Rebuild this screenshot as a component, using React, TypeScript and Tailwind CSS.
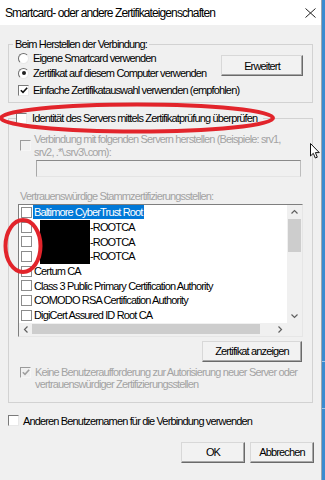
const FONT = "[font-family:'Liberation_Sans',Arial,sans-serif]";

function Check3D({ checked = false, disabled = false }: { checked?: boolean; disabled?: boolean }) {
  return (
    <span
      className={
        disabled
          ? "relative flex h-[11px] w-[11px] shrink-0 items-center justify-center border border-t-[#9a9a9a] border-l-[#9a9a9a] border-b-[#f6f6f6] border-r-[#f6f6f6] bg-[#f0f0f0]"
          : "relative flex h-[11px] w-[11px] shrink-0 items-center justify-center border border-t-[#7a7a7a] border-l-[#7a7a7a] border-b-[#e8e8e8] border-r-[#e8e8e8] bg-white"
      }
    >
      {checked && (
        <svg width="8" height="7" viewBox="0 0 8 7">
          <path d="M0.8 3.2 L3 5.4 L7.2 0.8" fill="none" stroke={disabled ? "#a0a0a0" : "#111"} strokeWidth="1.6" />
        </svg>
      )}
    </span>
  );
}

function Radio({ checked = false }: { checked?: boolean }) {
  return (
    <span className="flex h-[11px] w-[11px] shrink-0 items-center justify-center rounded-full border border-t-[#6e6e6e] border-l-[#6e6e6e] border-b-[#e8e8e8] border-r-[#e8e8e8] bg-white">
      {checked && <span className="h-[4px] w-[4px] rounded-full bg-[#222]" />}
    </span>
  );
}

function Btn({ children, className }: { children: React.ReactNode; className: string }) {
  return (
    <div
      className={
        "flex items-center justify-center border border-t-[#d8d8d8] border-l-[#d8d8d8] border-b-[#6a6a6a] border-r-[#6a6a6a] bg-[#f2f2f2] shadow-[inset_-1px_-1px_0_#a8a8a8] " +
        className
      }
    >
      {children}
    </div>
  );
}

function Chevron({ dir }: { dir: "up" | "down" | "left" | "right" }) {
  const d = {
    up: "M0.5 4.5 L3.5 1.5 L6.5 4.5",
    down: "M0.5 1.5 L3.5 4.5 L6.5 1.5",
    left: "M4.5 0.5 L1.5 3.5 L4.5 6.5",
    right: "M1.5 0.5 L4.5 3.5 L1.5 6.5",
  }[dir];
  const vertical = dir === "up" || dir === "down";
  return (
    <svg width={vertical ? 7 : 6} height={vertical ? 6 : 7} viewBox={vertical ? "0 0 7 6" : "0 0 6 7"}>
      <path d={d} fill="none" stroke="#606060" strokeWidth="1.2" />
    </svg>
  );
}

const certs = [
  { name: "Baltimore CyberTrust Root", selected: true },
  { name: "-ROOTCA", redacted: true },
  { name: "-ROOTCA", redacted: true },
  { name: "-ROOTCA", redacted: true },
  { name: "Certum CA" },
  { name: "Class 3 Public Primary Certification Authority" },
  { name: "COMODO RSA Certification Authority" },
  { name: "DigiCert Assured ID Root CA" },
];

function CertList() {
  return (
    <div className="flex flex-col border border-t-[#7f7f7f] border-l-[#7f7f7f] border-b-[#e6e6e6] border-r-[#e6e6e6] bg-white">
      <div className="flex">
        <div className="flex flex-1 flex-col overflow-hidden">
          {certs.map((c, i) => (
            <div key={i} className="flex h-[14.7px] items-center whitespace-nowrap pl-[2px]">
              <span className="h-[11px] w-[11px] shrink-0 border border-[#8c8c8c] bg-white" />
              {c.selected ? (
                <span className="ml-[1px] bg-[#0078d7] px-[1px] text-white">{c.name}</span>
              ) : c.redacted ? (
                <span className="flex h-full items-center">
                  <span className="ml-[8px] h-full w-[50px] bg-black" />
                  <span>{c.name}</span>
                </span>
              ) : (
                <span className="ml-[2px]">{c.name}</span>
              )}
            </div>
          ))}
        </div>
        <div className="flex w-[15px] flex-col items-center bg-[#f0f0f0]">
          <div className="flex h-[14px] items-center">
            <Chevron dir="up" />
          </div>
          <div className="h-[33px] w-[13px] bg-[#cdcdcd]" />
          <div className="flex-1" />
          <div className="flex h-[14px] items-center">
            <Chevron dir="down" />
          </div>
        </div>
      </div>
      <div className="flex h-[13px]">
        <div className="flex flex-1 items-center bg-[#f0f0f0]">
          <div className="flex w-[13px] justify-center">
            <Chevron dir="left" />
          </div>
          <div className="h-[10px] w-[228px] bg-[#cdcdcd]" />
          <div className="flex-1" />
          <div className="flex w-[15px] justify-center">
            <Chevron dir="right" />
          </div>
        </div>
        <div className="w-[15px] bg-[#f0f0f0]" />
      </div>
    </div>
  );
}

export default function App() {
  return (
    <div className={"relative flex h-[480px] w-[325px] overflow-hidden bg-white text-[11px] leading-[14px] tracking-[-0.85px] text-black " + FONT}>
      <div className="flex w-[321px] flex-col">
        {/* title bar */}
        <div className="flex h-[25px] shrink-0 items-center justify-between bg-white pl-[5px] pr-[5px]">
          <span className="text-[12px] tracking-[-0.9px]">Smartcard- oder andere Zertifikateigenschaften</span>
          <svg width="11" height="10" viewBox="0 0 11 10">
            <path d="M0.5 0.5 L10.5 9.5 M10.5 0.5 L0.5 9.5" stroke="#222" strokeWidth="1" fill="none" />
          </svg>
        </div>

        <div className="flex flex-1 flex-col bg-[#f0f0f0] px-[8px]">
          {/* group 1 */}
          <fieldset className="mt-[12px] border border-[#d2d2d2]">
            <legend className="ml-[4px] px-[2px]">Beim Herstellen der Verbindung:</legend>
            <div className="flex flex-col pb-[5px] pl-[9px] pr-[9px]">
              <div className="flex items-center">
                <div className="flex flex-1 flex-col gap-[1px]">
                  <div className="flex h-[14px] items-center gap-[4px]">
                    <Radio />
                    <span>Eigene Smartcard verwenden</span>
                  </div>
                  <div className="flex h-[14px] items-center gap-[4px]">
                    <Radio checked />
                    <span>Zertifikat auf diesem Computer verwenden</span>
                  </div>
                </div>
                <Btn className="h-[21px] w-[82px]">Erweitert</Btn>
              </div>
              <div className="mt-[3px] flex h-[14px] items-center gap-[4px]">
                <Check3D checked />
                <span>Einfache Zertifikatauswahl verwenden (empfohlen)</span>
              </div>
            </div>
          </fieldset>

          {/* group 2 */}
          <fieldset className="mt-[8px] border border-[#d2d2d2]">
            <legend className="ml-[7px] pr-[6px]">
              <span className="flex items-center gap-[5px]">
                <Check3D />
                <span>Identität des Servers mittels Zertifikatprüfung überprüfen</span>
              </span>
            </legend>
            <div className="flex flex-col pb-[11px] pl-[11px] pr-[10px]">
              <div className="mt-[8px] flex items-center gap-[3px]">
                <Check3D disabled />
                <span className="whitespace-nowrap leading-[12.5px] text-[#a3a3a3]">
                  Verbindung mit folgenden Servern herstellen (Beispiele: srv1,
                  <br />
                  srv2, .*\.srv3\.com):
                </span>
              </div>
              <div className="mt-[2px] ml-[16px] mr-[1px] h-[17px] border border-t-[#8a8a8a] border-l-[#a8a8a8] border-b-[#e4e4e4] border-r-[#bdbdbd] bg-[#f0f0f0]" />
              <div className="mt-[12px] text-[#a3a3a3]">Vertrauenswürdige Stammzertifizierungsstellen:</div>
              <div className="mt-[1px] ml-[-2px] mr-[-1px]">
                <CertList />
              </div>
              <Btn className="mt-[4px] mr-0 h-[21px] w-[100px] self-end">Zertifikat anzeigen</Btn>
              <div className="mt-[4px] flex items-start gap-[4px]">
                <span className="mt-[1px]">
                  <Check3D checked disabled />
                </span>
                <span className="whitespace-nowrap leading-[12.5px] text-[#a3a3a3]">
                  Keine Benutzeraufforderung zur Autorisierung neuer Server oder
                  <br />
                  vertrauenswürdiger Zertifizierungsstellen
                </span>
              </div>
            </div>
          </fieldset>

          <div className="mt-[11px] flex h-[14px] items-center gap-[4px]">
            <Check3D />
            <span>Anderen Benutzernamen für die Verbindung verwenden</span>
          </div>

          <div className="mt-[14px] mr-[-1px] flex justify-end gap-[5px]">
            <Btn className="h-[21px] w-[64px]">OK</Btn>
            <Btn className="h-[21px] w-[64px]">Abbrechen</Btn>
          </div>
        </div>
      </div>

      {/* window behind, peeking out on the right */}
      <div className="flex w-[4px] flex-col border-l border-[#9aa6b0] bg-[#3a8bd0]">
        <div className="h-[361px]" />
        <div className="h-[1px] bg-[#9cc6ea]" />
        <div className="h-[46px]" />
        <div className="h-[1px] bg-[#9cc6ea]" />
      </div>

      {/* red markings and mouse pointer drawn over the dialog */}
      <svg className="pointer-events-none absolute left-0 top-0" width="325" height="480" viewBox="0 0 325 480">
        <ellipse cx="137" cy="118" rx="136" ry="13.5" fill="none" stroke="#e2242b" strokeWidth="4" />
        <ellipse cx="23" cy="246" rx="17.5" ry="26" fill="none" stroke="#e2242b" strokeWidth="4" />
        <path
          d="M310.5 143.5 L310.5 156 L313.3 153.3 L315.3 158 L317.3 157.2 L315.4 152.6 L319.3 152.6 Z"
          fill="#fff"
          stroke="#111"
          strokeWidth="1"
        />
      </svg>
    </div>
  );
}
